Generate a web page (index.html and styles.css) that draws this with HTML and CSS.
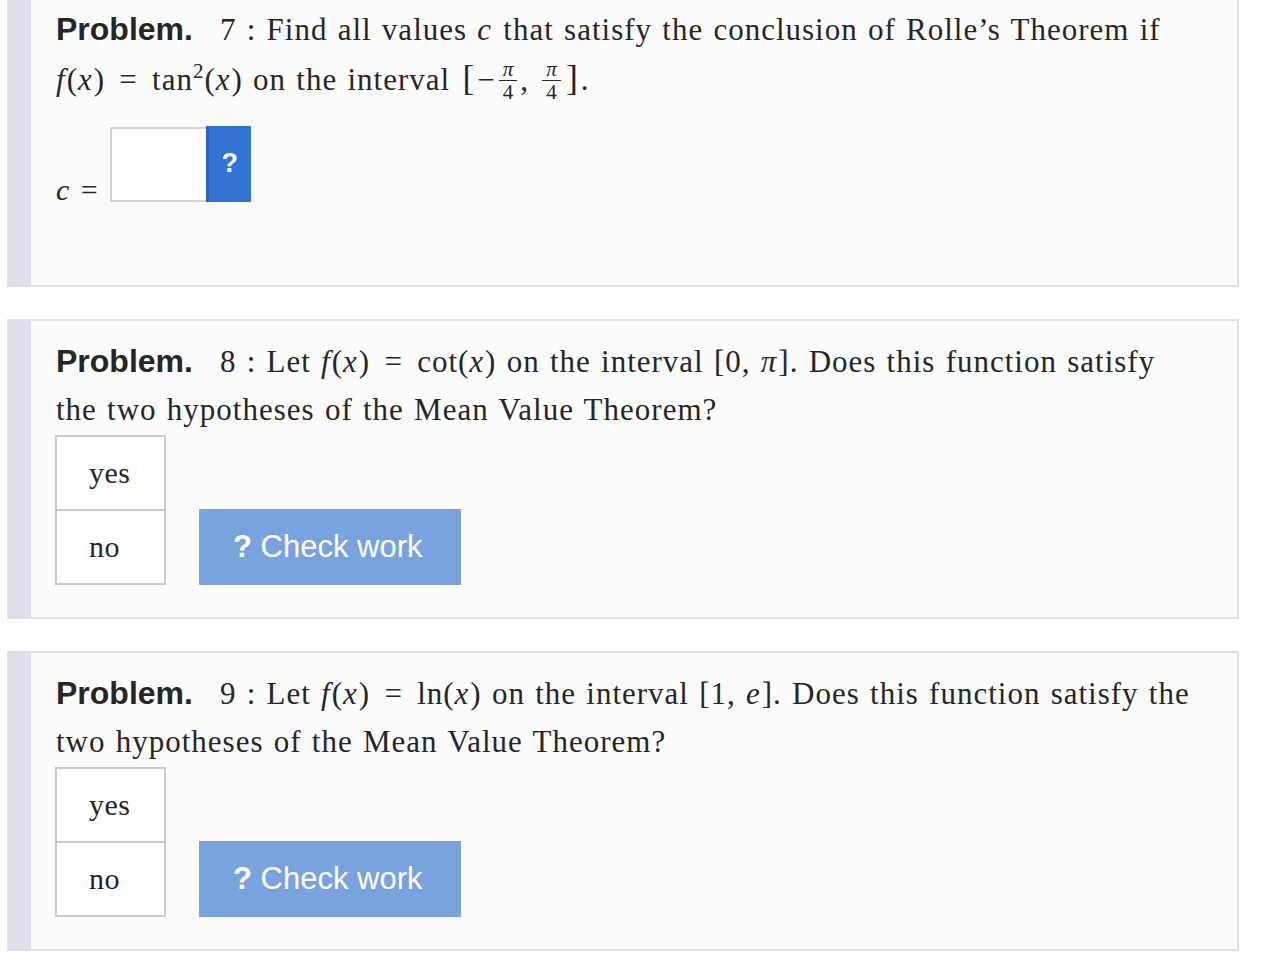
FILE: index.html
```html
<!DOCTYPE html>
<html lang="en">
<head>
<meta charset="utf-8">
<title>Problems</title>
<link rel="stylesheet" href="styles.css">
</head>
<body>
<div class="page">
  <section class="card card-first">
    <div class="prompt">
      <span class="line"><span class="label">Problem.</span><span class="num">7</span> : Find all values <i>c</i> that satisfy the conclusion of Rolle’s Theorem if</span>
      <span class="line"><i>f</i>(<i>x</i>) <span class="rel">=</span> tan<sup>2</sup>(<i>x</i>) on the interval <span class="br">[</span>−<span class="frac"><span class="nu">π</span><span class="de">4</span></span>, <span class="frac"><span class="nu">π</span><span class="de">4</span></span><span class="br">]</span>.</span>
    </div>
    <div class="answer-row">
      <span class="math"><i>c</i> <span class="rel">=</span></span><span class="field"></span><span class="hint">?</span>
    </div>
  </section>

  <section class="card">
    <div class="prompt">
      <span class="line"><span class="label">Problem.</span><span class="num">8</span> : Let <i>f</i>(<i>x</i>) <span class="rel">=</span> cot(<i>x</i>) on the interval [0, <i>π</i>]. Does this function satisfy</span>
      <span class="line">the two hypotheses of the Mean Value Theorem?</span>
    </div>
    <div class="choice-row">
      <div class="choices">
        <div class="choice">yes</div>
        <div class="choice">no</div>
      </div>
      <div class="check">? <span class="check-text">Check work</span></div>
    </div>
  </section>

  <section class="card">
    <div class="prompt">
      <span class="line"><span class="label">Problem.</span><span class="num">9</span> : Let <i>f</i>(<i>x</i>) <span class="rel">=</span> ln(<i>x</i>) on the interval [1, <i>e</i>]. Does this function satisfy the</span>
      <span class="line">two hypotheses of the Mean Value Theorem?</span>
    </div>
    <div class="choice-row">
      <div class="choices">
        <div class="choice">yes</div>
        <div class="choice">no</div>
      </div>
      <div class="check">? <span class="check-text">Check work</span></div>
    </div>
  </section>
</div>
</body>
</html>
```
FILE: styles.css
```css
* { box-sizing: border-box; }
html, body { margin: 0; padding: 0; background: #fefefe; }
body {
  font-family: "Liberation Serif", "DejaVu Serif", serif;
  color: #262626;
}
.page {
  margin-top: -13px;
  padding-left: 7px;
}
.card {
  width: 1232px;
  min-height: 300px;
  margin-bottom: 32px;
  background: #fcfcfc;
  border: 2px solid #dfdfeb;
  border-left: 24px solid #dfdfeb;
  padding: 16px 37px 31px 25px;
}
.prompt {
  font-size: 31px;
  line-height: 48px;
  letter-spacing: 1px;
  word-spacing: 1.5px;
}
.line { display: block; white-space: nowrap; }
.label {
  font-family: "Liberation Sans", Arial, sans-serif;
  font-weight: bold;
  font-size: 32px;
  letter-spacing: 0;
  word-spacing: 0;
  margin-right: 27px;
  color: #262626;
}
.prompt i { font-style: italic; padding-right: 1px; }
.rel { margin: 0 4px; }
sup { font-size: 0.68em; line-height: 0; vertical-align: 0.55em; }
.br { font-size: 1.15em; margin: 0 2px; }
.frac {
  display: inline-flex;
  flex-direction: column;
  align-items: center;
  vertical-align: middle;
  font-size: 0.68em;
  line-height: 0.9;
  letter-spacing: 0;
  margin: 0 3px;
  position: relative;
  top: -2px;
}
.frac .nu { font-style: italic; border-bottom: 1px solid #262626; padding: 0 4px 1px; }
.frac .de { padding-top: 2px; }

.answer-row {
  margin-top: 22px;
  display: flex;
  align-items: flex-end;
}
.math {
  font-size: 30px;
  line-height: 30px;
  margin-right: 8px;
  position: relative;
  top: 3px;
}
.field {
  width: 96px;
  height: 75px;
  background: #fff;
  border: 2px solid #d4d4d4;
  border-right: none;
}
.hint {
  width: 45px;
  height: 76px;
  background: #3174d4;
  border-left: 3px solid #2766c0;
  color: #fff;
  font-family: "Liberation Sans", Arial, sans-serif;
  font-weight: bold;
  font-size: 27px;
  display: flex;
  align-items: center;
  justify-content: center;
  padding-bottom: 2px;
}

.choice-row {
  margin-top: 1px;
  display: flex;
  align-items: flex-end;
}
.choices { width: 111px; margin-left: -1px; display: flex; flex-direction: column; }
.choice {
  height: 76px;
  background: #fff;
  border: 2px solid #cbcbcb;
  padding-left: 32px;
  display: flex;
  align-items: center;
  font-size: 30px;
  letter-spacing: 0.5px;
}
.choice + .choice { margin-top: -2px; }
.check {
  margin-left: 33px;
  width: 262px;
  height: 76px;
  background: #79a3df;
  color: #fff;
  font-family: "Liberation Sans", Arial, sans-serif;
  font-weight: bold;
  font-size: 31px;
  display: flex;
  align-items: center;
  padding-left: 34px;
  white-space: pre;
}
.check-text { font-weight: normal; }
```
